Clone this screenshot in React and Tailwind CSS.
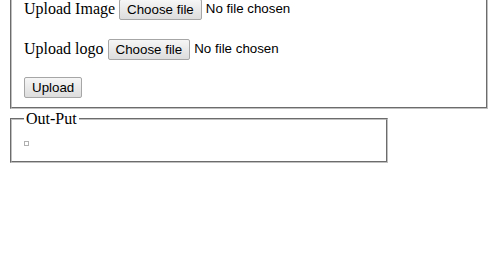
import React from "react";

function Btn({ children }) {
  return (
    <span className="inline-flex h-[21px] items-center rounded-[2px] border border-[#a6a6a6] bg-gradient-to-b from-[#f6f6f6] to-[#dddddd] px-[7px] text-[13.33px] leading-none text-black [font-family:'Liberation_Sans',Arial,sans-serif]">
      {children}
    </span>
  );
}

function FileRow({ label, className = "" }) {
  return (
    <div className={`flex h-[21px] items-center ${className}`}>
      <span className="text-[16px] text-black">{label}</span>
      <span className="ml-[4px]">
        <Btn>Choose file</Btn>
      </span>
      <span className="ml-[4px] text-[13.33px] text-black [font-family:'Liberation_Sans',Arial,sans-serif]">
        No file chosen
      </span>
    </div>
  );
}

export default function App() {
  return (
    <div className="h-[260px] w-[495px] overflow-hidden bg-white pl-[10px] [font-family:'Liberation_Serif','Times_New_Roman',serif]">
      <div className="w-[478px] border-2 border-t-0 border-[#c0c0c0] pb-[9px] pl-[12px] [border-style:groove]">
        <FileRow label="Upload Image" className="-mt-[2px]" />
        <FileRow label="Upload logo" className="mt-[19px]" />
        <div className="mt-[18px] flex h-[21px] items-center">
          <Btn>Upload</Btn>
        </div>
      </div>
      <fieldset className="mt-[1px] w-[378px] border-2 border-[#c0c0c0] px-[12px] pb-[15px] [border-style:groove]">
        <legend className="px-[2px] text-[16px] leading-[18px] text-black">Out-Put</legend>
        <div className="mt-[13px] h-[5px] w-[5px] border border-[#b0b0b0]" />
      </fieldset>
    </div>
  );
}
